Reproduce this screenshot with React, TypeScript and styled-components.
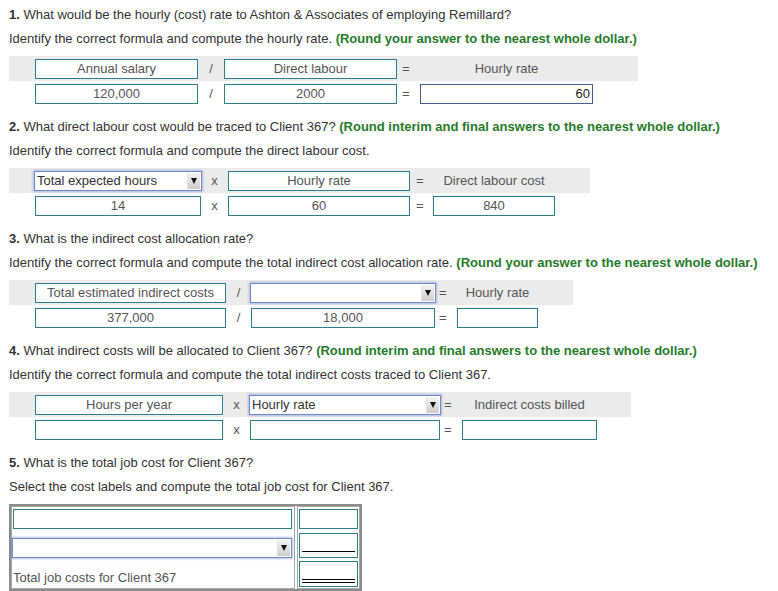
import React from "react";
import styled, { createGlobalStyle } from "styled-components";

const GlobalStyle = createGlobalStyle`
  html, body {
    margin: 0;
    padding: 0;
    background: #fff;
  }
  body {
    font-family: "Liberation Sans", Arial, sans-serif;
    font-size: 13px;
    color: #333;
  }
  * {
    box-sizing: border-box;
  }
`;

const Page = styled.div`
  padding: 5px 0 0 9px;
`;

const Section = styled.section`
  margin-bottom: 11px;
`;

const Title = styled.div`
  line-height: 20px;
  white-space: nowrap;
`;

const Prompt = styled.div`
  line-height: 20px;
  margin: 4px 0 7px;
  white-space: nowrap;
`;

const Note = styled.b`
  color: #267b2a;
`;

const Formula = styled.div`
  display: flex;
  flex-direction: column;
`;

const FormulaRow = styled.div<{ $shaded?: boolean; $w: number }>`
  display: flex;
  align-items: flex-start;
  width: ${(p) => p.$w}px;
  height: 25px;
  padding: 3px 0 0 25px;
  background: ${(p) => (p.$shaded ? "#ebebeb" : "transparent")};
`;

const Slot = styled.div<{ $w: number }>`
  flex: none;
  width: ${(p) => p.$w}px;
`;

const Op = styled.span<{ $w: number; $pad?: number }>`
  flex: none;
  width: ${(p) => p.$w}px;
  line-height: 20px;
  color: #555;
  text-align: ${(p) => (p.$pad === undefined ? "center" : "left")};
  padding-left: ${(p) => p.$pad ?? 0}px;
`;

const Field = styled.div`
  height: 20px;
  margin: 0 1px;
  border: 1px solid #2d7f89;
  background: #fff;
  line-height: 18px;
  text-align: center;
  color: #555;
  white-space: nowrap;
  overflow: hidden;
`;

const Answer = styled(Field)`
  border-color: #4a5b94;
  text-align: right;
  padding-right: 2px;
  color: #222;
`;

const HeadLabel = styled.div`
  line-height: 20px;
  text-align: center;
  color: #555;
  white-space: nowrap;
`;

const SelectBox = styled.div<{ $inset?: number }>`
  display: flex;
  align-items: center;
  justify-content: space-between;
  height: 20px;
  margin-right: ${(p) => p.$inset ?? 0}px;
  border: 1px solid #7088c8;
  box-shadow: 0 0 2px 1px rgba(100, 128, 205, 0.45);
  background: #fff;
  padding: 0 1px 0 2px;
  color: #333;
  line-height: 18px;
  white-space: nowrap;
`;

const Arrow = styled.span`
  flex: none;
  position: relative;
  width: 13px;
  height: 16px;
  background: linear-gradient(#f4f4f4, #cdcdcd);
  border-left: 1px solid #e2e2e2;

  &::after {
    content: "";
    position: absolute;
    left: 3px;
    top: 5px;
    border-left: 3.5px solid transparent;
    border-right: 3.5px solid transparent;
    border-top: 6px solid #111;
  }
`;

function Select({ value, inset }: { value?: string; inset?: number }) {
  return (
    <SelectBox $inset={inset}>
      <span>{value ?? ""}</span>
      <Arrow />
    </SelectBox>
  );
}

const CostTable = styled.div`
  display: flex;
  gap: 2px;
  width: 353px;
  border: 2px solid #8c8c8c;
`;

const LabelCell = styled.div`
  flex: none;
  display: flex;
  flex-direction: column;
  width: 284px;
  padding: 2px 2px 1px 0;
  border: 1px solid #a8a8a8;
`;

const AmountCell = styled.div`
  flex: 1;
  display: flex;
  flex-direction: column;
  padding: 2px 0 1px;
  border: 1px solid #a8a8a8;
`;

const LabelField = styled(Field)`
  margin: 0 0 9px 1px;
`;

const TotalLabel = styled.div`
  margin-top: 11px;
  padding-left: 1px;
  line-height: 18px;
  color: #555;
`;

const AmountBox = styled(Field)<{ $h: number }>`
  display: flex;
  flex-direction: column;
  justify-content: flex-end;
  height: ${(p) => p.$h}px;
  margin-bottom: 3px;
  &:first-child {
    margin-bottom: 4px;
  }
  &:last-child {
    margin-bottom: 0;
  }
`;

const Rule = styled.span<{ $double?: boolean }>`
  margin: 0 2px ${(p) => (p.$double ? 3 : 5)}px 2px;
  border-bottom: ${(p) => (p.$double ? "4px double #000" : "1px solid #000")};
`;

export default function App() {
  return (
    <>
      <GlobalStyle />
      <Page>
        <Section>
          <Title>
            <b>1.</b> What would be the hourly (cost) rate to Ashton &amp; Associates of employing Remillard?
          </Title>
          <Prompt>
            Identify the correct formula and compute the hourly rate.{" "}
            <Note>(Round your answer to the nearest whole dollar.)</Note>
          </Prompt>
          <Formula>
            <FormulaRow $shaded $w={629}>
              <Slot $w={165}>
                <Field>Annual salary</Field>
              </Slot>
              <Op $w={24}>/</Op>
              <Slot $w={175}>
                <Field>Direct labour</Field>
              </Slot>
              <Op $w={21} $pad={4}>=</Op>
              <Slot $w={175}>
                <HeadLabel>Hourly rate</HeadLabel>
              </Slot>
            </FormulaRow>
            <FormulaRow $w={629}>
              <Slot $w={165}>
                <Field>120,000</Field>
              </Slot>
              <Op $w={24}>/</Op>
              <Slot $w={175}>
                <Field>2000</Field>
              </Slot>
              <Op $w={21} $pad={4}>=</Op>
              <Slot $w={175}>
                <Answer>60</Answer>
              </Slot>
            </FormulaRow>
          </Formula>
        </Section>

        <Section>
          <Title>
            <b>2.</b> What direct labour cost would be traced to Client 367?{" "}
            <Note>(Round interim and final answers to the nearest whole dollar.)</Note>
          </Title>
          <Prompt>Identify the correct formula and compute the direct labour cost.</Prompt>
          <Formula>
            <FormulaRow $shaded $w={581}>
              <Slot $w={168}>
                <Select value="Total expected hours" />
              </Slot>
              <Op $w={25}>x</Op>
              <Slot $w={184}>
                <Field>Hourly rate</Field>
              </Slot>
              <Op $w={21} $pad={5}>=</Op>
              <Slot $w={124}>
                <HeadLabel>Direct labour cost</HeadLabel>
              </Slot>
            </FormulaRow>
            <FormulaRow $w={581}>
              <Slot $w={168}>
                <Field>14</Field>
              </Slot>
              <Op $w={25}>x</Op>
              <Slot $w={184}>
                <Field>60</Field>
              </Slot>
              <Op $w={21} $pad={5}>=</Op>
              <Slot $w={124}>
                <Field>840</Field>
              </Slot>
            </FormulaRow>
          </Formula>
        </Section>

        <Section>
          <Title>
            <b>3.</b> What is the indirect cost allocation rate?
          </Title>
          <Prompt>
            Identify the correct formula and compute the total indirect cost allocation rate.{" "}
            <Note>(Round your answer to the nearest whole dollar.)</Note>
          </Prompt>
          <Formula>
            <FormulaRow $shaded $w={564}>
              <Slot $w={193}>
                <Field>Total estimated indirect costs</Field>
              </Slot>
              <Op $w={23}>/</Op>
              <Slot $w={186}>
                <Select />
              </Slot>
              <Op $w={20} $pad={3}>=</Op>
              <Slot $w={83}>
                <HeadLabel>Hourly rate</HeadLabel>
              </Slot>
            </FormulaRow>
            <FormulaRow $w={564}>
              <Slot $w={193}>
                <Field>377,000</Field>
              </Slot>
              <Op $w={23}>/</Op>
              <Slot $w={186}>
                <Field>18,000</Field>
              </Slot>
              <Op $w={20} $pad={3}>=</Op>
              <Slot $w={83}>
                <Field />
              </Slot>
            </FormulaRow>
          </Formula>
        </Section>

        <Section>
          <Title>
            <b>4.</b> What indirect costs will be allocated to Client 367?{" "}
            <Note>(Round interim and final answers to the nearest whole dollar.)</Note>
          </Title>
          <Prompt>Identify the correct formula and compute the total indirect costs traced to Client 367.</Prompt>
          <Formula>
            <FormulaRow $shaded $w={622}>
              <Slot $w={190}>
                <Field>Hours per year</Field>
              </Slot>
              <Op $w={25}>x</Op>
              <Slot $w={192}>
                <Select value="Hourly rate" />
              </Slot>
              <Op $w={20} $pad={3}>=</Op>
              <Slot $w={137}>
                <HeadLabel>Indirect costs billed</HeadLabel>
              </Slot>
            </FormulaRow>
            <FormulaRow $w={622}>
              <Slot $w={190}>
                <Field />
              </Slot>
              <Op $w={25}>x</Op>
              <Slot $w={192}>
                <Field />
              </Slot>
              <Op $w={20} $pad={3}>=</Op>
              <Slot $w={137}>
                <Field />
              </Slot>
            </FormulaRow>
          </Formula>
        </Section>

        <section>
          <Title>
            <b>5.</b> What is the total job cost for Client 367?
          </Title>
          <Prompt>Select the cost labels and compute the total job cost for Client 367.</Prompt>
          <CostTable>
            <LabelCell>
              <LabelField />
              <Select />
              <TotalLabel>Total job costs for Client 367</TotalLabel>
            </LabelCell>
            <AmountCell>
              <AmountBox $h={20} />
              <AmountBox $h={25}>
                <Rule />
              </AmountBox>
              <AmountBox $h={26}>
                <Rule $double />
              </AmountBox>
            </AmountCell>
          </CostTable>
        </section>
      </Page>
    </>
  );
}
